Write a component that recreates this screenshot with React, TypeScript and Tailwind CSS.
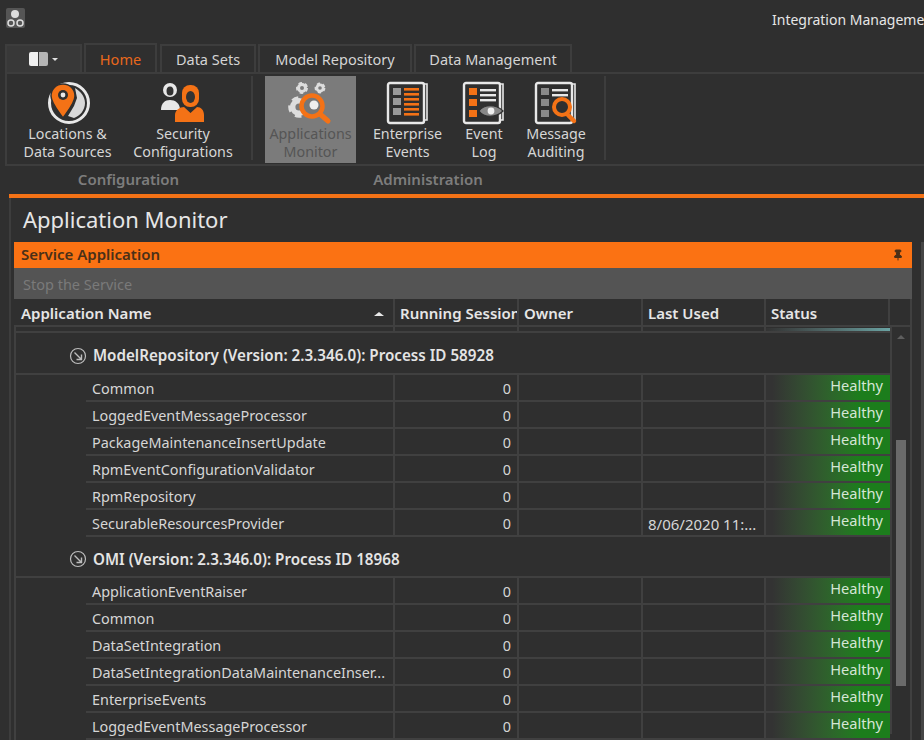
import { Pin } from "lucide-react";

const FONT = "font-['Noto_Sans','Open_Sans',sans-serif]";

function LocationIcon() {
  return (
    <svg width="46" height="46" viewBox="0 0 46 46">
      <circle cx="24" cy="23" r="19.5" fill="#2f2f2f" stroke="#e8e8e8" strokeWidth="3" />
      <path d="M30 8c5 3 10 8 10 15 0 7-5 13-11 15l-6-2 6-10 3-8z" fill="#d8d8d8" />
      <path d="M18 4C11 4 6 9 6 16c0 7 7 15 12 22 5-7 12-15 12-22 0-7-5-12-12-12z" fill="#f47216" stroke="#2f2f2f" strokeWidth="1.5" />
      <circle cx="18" cy="15" r="5" fill="#2f2f2f" />
      <circle cx="18" cy="15" r="2.4" fill="#e8e8e8" />
    </svg>
  );
}

function SecurityIcon() {
  return (
    <svg width="44" height="42" viewBox="0 0 44 42">
      <circle cx="9" cy="8" r="7" fill="#e8e8e8" />
      <path d="M0 28c0-7 4-10 9-10s10 3 10 10z" fill="#e8e8e8" />
      <ellipse cx="9" cy="9" rx="3.5" ry="4.5" fill="#333" />
      <rect x="21" y="3" width="17" height="22" rx="8" fill="#f47216" />
      <ellipse cx="29.5" cy="15" rx="4.5" ry="6" fill="#333" />
      <path d="M14 40v-7c0-5 5-8 9-8l6.5 6 6.5-6c4 0 7 3 7 8v7z" fill="#f47216" />
    </svg>
  );
}

function Gear({ cx, cy, r }: { cx: number; cy: number; r: number }) {
  return (
    <g>
      <circle cx={cx} cy={cy} r={r * 0.7} fill="none" stroke="#ddd" strokeWidth={r * 0.6} />
      <circle cx={cx} cy={cy} r={r} fill="none" stroke="#ddd" strokeWidth={r * 0.4} strokeDasharray={`${r * 0.7} ${r * 0.6}`} />
    </g>
  );
}

function MonitorIcon() {
  return (
    <svg width="46" height="44" viewBox="0 0 46 44">
      <Gear cx={14} cy={7} r={5} />
      <Gear cx={32} cy={7} r={4.5} />
      <Gear cx={11} cy={26} r={9} />
      <path d="M32 33l8 7" stroke="#f47216" strokeWidth="5" strokeLinecap="round" />
      <circle cx="24" cy="25" r="10.5" fill="#777" stroke="#f47216" strokeWidth="4.5" />
      <circle cx="26" cy="24" r="4.5" fill="#eee" />
    </svg>
  );
}

function DocFrame({ children }: { children: React.ReactNode }) {
  return (
    <svg width="44" height="44" viewBox="0 0 44 44">
      <path d="M36 3h5v36H36" fill="none" stroke="#e8e8e8" strokeWidth="1.6" />
      <rect x="2" y="2" width="36" height="40" rx="2" fill="#2f2f2f" stroke="#e8e8e8" strokeWidth="2.4" />
      {children}
    </svg>
  );
}

function EventsIcon() {
  return (
    <DocFrame>
      {[7, 17, 27].map((y) => (
        <rect key={y} x="7" y={y} width="8" height="7" fill="#9a9a9a" />
      ))}
      {[7, 12, 17, 22, 27, 32].map((y) => (
        <rect key={y} x="18" y={y} width="15" height="2.6" fill="#f47216" />
      ))}
    </DocFrame>
  );
}

function LogIcon() {
  return (
    <DocFrame>
      {[7, 18, 29].map((y) => (
        <rect key={y} x="7" y={y} width="8" height="7" fill="#f47216" />
      ))}
      {[8, 13, 18].map((y) => (
        <rect key={y} x="18" y={y} width="16" height="2.4" fill="#e8e8e8" />
      ))}
      <path d="M17 30c5-7 17-7 24 0-7 7-19 7-24 0z" fill="#888" stroke="#2f2f2f" strokeWidth="1.2" />
      <circle cx="29" cy="30" r="3.4" fill="#eee" />
    </DocFrame>
  );
}

function AuditIcon() {
  return (
    <DocFrame>
      {[7, 18, 29].map((y) => (
        <rect key={y} x="7" y={y} width="8" height="7" fill="#8a8a8a" />
      ))}
      {[8, 13].map((y) => (
        <rect key={y} x="18" y={y} width="16" height="2.4" fill="#e8e8e8" />
      ))}
      <path d="M34 34l6 6" stroke="#f47216" strokeWidth="4.5" strokeLinecap="round" />
      <circle cx="28" cy="26" r="8" fill="#2f2f2f" stroke="#f47216" strokeWidth="4" />
    </DocFrame>
  );
}

function RibbonButton({ icon, lines, width, active }: { icon: React.ReactNode; lines: string[]; width: string; active?: boolean }) {
  return (
    <div className={`flex flex-col items-center pt-[4px] h-[87px] ${width} ${active ? "bg-[#7b7b7b] text-[#555555]" : "text-[#d6d6d6]"}`}>
      <div className="h-[46px] flex items-center justify-center">{icon}</div>
      <div className="text-[14.3px] leading-[18px] text-center whitespace-nowrap -mt-[1px]">
        {lines.map((l) => (
          <div key={l}>{l}</div>
        ))}
      </div>
    </div>
  );
}

function Tab({ label, width, active }: { label: string; width: string; active?: boolean }) {
  return (
    <div
      className={`${width} flex items-center justify-center pt-[2px] text-[14.5px] border-t-2 border-x-2 border-[#3d3d3d] ${
        active ? "h-[30px] text-[#e8681c] border-b-0 -mb-[1px] relative" : "h-[28px] text-[#d4d4d4]"
      }`}
    >
      {label}
    </div>
  );
}

function Row({ name, used }: { name: string; used?: string }) {
  return (
    <div className="flex h-[27px] text-[14.4px] text-[#d6d6d6]">
      <div className="w-[70px] shrink-0" />
      <div className="flex flex-1 border-b-2 border-[#404040]">
        <div className="w-[309px] pl-[6px] pt-[3px] flex items-center border-r-2 border-[#404040] whitespace-nowrap overflow-hidden">{name}</div>
        <div className="w-[124px] pr-[6px] pt-[3px] flex items-center justify-end border-r-2 border-[#404040]">0</div>
        <div className="w-[124px] border-r-2 border-[#404040]" />
        <div className="w-[123px] pl-[5px] pt-[3px] flex items-center border-r-2 border-[#404040] whitespace-nowrap text-[15px]">{used}</div>
        <div className="flex-1 pr-[7px] pb-[3px] flex items-center justify-end text-[14.6px] text-[#d5e6d5] bg-gradient-to-r from-[#333333] from-[5%] to-[#1c7d1c] to-[75%]">Healthy</div>
      </div>
    </div>
  );
}

function GroupRow({ label, height }: { label: string; height: string }) {
  return (
    <div className={`${height} border-b-2 border-[#404040] flex items-center pl-[53px] pt-[5px] gap-[6px] text-[15.2px] font-semibold text-[#e4e4e4] whitespace-nowrap`}>
      <svg width="18" height="18" viewBox="0 0 18 18" fill="none" stroke="#bdbdbd">
        <circle cx="9" cy="9" r="7.5" strokeWidth="1.2" />
        <path d="M5.5 5.5l6.5 6.5M12.5 7.5v5h-5" strokeWidth="1.4" />
      </svg>
      {label}
    </div>
  );
}

function HeaderCell({ label, width }: { label: string; width: string }) {
  return <div className={`${width} pl-[5px] pr-[2px] pt-[3px] flex items-center border-r-2 border-[#404040] whitespace-nowrap overflow-hidden`}>{label}</div>;
}

export default function App() {
  const first = ["Common", "LoggedEventMessageProcessor", "PackageMaintenanceInsertUpdate", "RpmEventConfigurationValidator", "RpmRepository"];
  const second = ["ApplicationEventRaiser", "Common", "DataSetIntegration", "DataSetIntegrationDataMaintenanceInser...", "EnterpriseEvents", "LoggedEventMessageProcessor"];

  return (
    <div className={`w-[924px] h-[740px] overflow-hidden bg-[#2f2f2f] ${FONT}`}>
      <div className="h-[43px] flex items-center justify-between pl-[5px] overflow-hidden">
        <svg width="21" height="22" viewBox="0 0 21 22" className="-mt-[7px]">
          <rect x="1" y="1" width="19" height="20" rx="2" fill="#555" />
          <circle cx="10" cy="7" r="4" fill="#ddd" />
          <circle cx="6" cy="16" r="3" fill="none" stroke="#ddd" strokeWidth="1.5" />
          <circle cx="15" cy="16" r="3" fill="none" stroke="#ddd" strokeWidth="1.5" />
        </svg>
        <div className="w-[152px] shrink-0 text-[14px] text-[#e6e6e6] whitespace-nowrap -mt-[4px]">Integration Management Console</div>
      </div>

      <div className="flex items-end gap-[2px] pl-[5px] h-[29px]">
        <div className="w-[77px] h-[28px] flex items-center justify-center gap-[4px] bg-[#383838] border-t-2 border-x-2 border-[#3d3d3d]">
          <span className="w-[19px] h-[14px] flex gap-[1px] rounded-[2px] overflow-hidden">
            <span className="w-[9px] bg-[#f0f0f0]" />
            <span className="w-[9px] bg-[#b5b5b5]" />
          </span>
          <span className="border-x-[3px] border-x-transparent border-t-[3px] border-t-[#e0e0e0]" />
        </div>
        <Tab label="Home" width="w-[73px]" active />
        <Tab label="Data Sets" width="w-[96px] ml-[1px]" />
        <Tab label="Model Repository" width="w-[154px]" />
        <Tab label="Data Management" width="w-[158px]" />
      </div>

      <div className="ml-[5px] h-[94px] border-y-2 border-l-2 border-[#3d3d3d] flex pt-[2px] pl-[4px]">
        <RibbonButton icon={<LocationIcon />} lines={["Locations &", "Data Sources"]} width="w-[115px] ml-[-1px]" />
        <RibbonButton icon={<SecurityIcon />} lines={["Security", "Configurations"]} width="w-[116px]" />
        <div className="w-[2px] h-[84px] bg-[#3d3d3d] ml-[10px] mr-[12px]" />
        <RibbonButton icon={<MonitorIcon />} lines={["Applications", "Monitor"]} width="w-[91px]" active />
        <RibbonButton icon={<EventsIcon />} lines={["Enterprise", "Events"]} width="w-[91px] ml-[6px]" />
        <RibbonButton icon={<LogIcon />} lines={["Event", "Log"]} width="w-[56px] ml-[3px]" />
        <RibbonButton icon={<AuditIcon />} lines={["Message", "Auditing"]} width="w-[88px]" />
        <div className="w-[2px] h-[84px] bg-[#3d3d3d] ml-[4px]" />
      </div>

      <div className="flex h-[28px] items-center text-[15px] font-semibold text-[#7d7d7d]">
        <div className="w-[257px] text-center -mt-[2px]">Configuration</div>
        <div className="w-[342px] text-center -mt-[2px]">Administration</div>
      </div>

      <div className="ml-[9px] h-[4px] bg-[#f47216]" />

      <div className="ml-[9px] border-l-2 border-[#3d3d3d] pl-[3px] flex">
        <div className="w-[898px] shrink-0">
          <div className="h-[44px] pl-[9px] pb-[2px] flex items-center text-[22px] text-[#e6e6e6]">Application Monitor</div>
          <div className="h-[26px] bg-[#fb7213] flex items-center justify-between pl-[7px] pr-[8px] pb-[1px] text-[15px] font-semibold text-[#4a3018]">
            Service Application
            <Pin size={12} className="text-[#4a3018] fill-[#4a3018]" />
          </div>
          <div className="h-[31px] bg-[#545454] flex items-center pl-[9px] pt-[3px] text-[14.5px] text-[#7a7a7a]">Stop the Service</div>

          <div className="border-r-2 border-[#404040]">
            <div className="flex h-[28px] border-b-2 border-[#404040] text-[15px] font-semibold text-[#e6e6e6]">
              <div className="w-[381px] pl-[7px] pr-[9px] pt-[3px] flex items-center justify-between border-r-2 border-[#404040]">
                Application Name
                <span className="border-x-[5px] border-x-transparent border-b-[4px] border-b-[#e8e8e8]" />
              </div>
              <HeaderCell label="Running Sessions" width="w-[124px]" />
              <HeaderCell label="Owner" width="w-[124px]" />
              <HeaderCell label="Last Used" width="w-[123px]" />
              <HeaderCell label="Status" width="w-[124px]" />
            </div>

            <div className="flex">
              <div className="w-[876px] shrink-0 border-l-2 border-[#404040]">
                <div className="flex h-[6px] border-b-2 border-[#404040]">
                  <div className="w-[379px] border-r-2 border-[#404040]" />
                  <div className="w-[124px] border-r-2 border-[#404040]" />
                  <div className="w-[124px] border-r-2 border-[#404040]" />
                  <div className="w-[123px] border-r-2 border-[#404040]" />
                  <div className="flex-1 flex items-end">
                    <div className="w-full h-[3px] bg-gradient-to-r from-[#333333] to-[#6aa3a3]" />
                  </div>
                </div>
                <GroupRow label="ModelRepository (Version: 2.3.346.0): Process ID 58928" height="h-[42px]" />
                {first.map((n) => (
                  <Row key={n} name={n} />
                ))}
                <Row name="SecurableResourcesProvider" used="8/06/2020 11:..." />
                <GroupRow label="OMI (Version: 2.3.346.0): Process ID 18968" height="h-[41px]" />
                {second.map((n) => (
                  <Row key={n} name={n} />
                ))}
              </div>
              <div className="w-[20px] h-[407px] border-l-2 border-[#404040] flex flex-col items-center pt-[8px]">
                <span className="border-x-[4px] border-x-transparent border-b-[4px] border-b-[#5e5e5e]" />
                <div className="w-[10px] h-[246px] bg-[#6a6a6a] mt-[101px]" />
              </div>
            </div>
          </div>
        </div>
        <div className="w-[3px] ml-[9px] mt-[44px] h-[500px] bg-[#454545]" />
      </div>
    </div>
  );
}
